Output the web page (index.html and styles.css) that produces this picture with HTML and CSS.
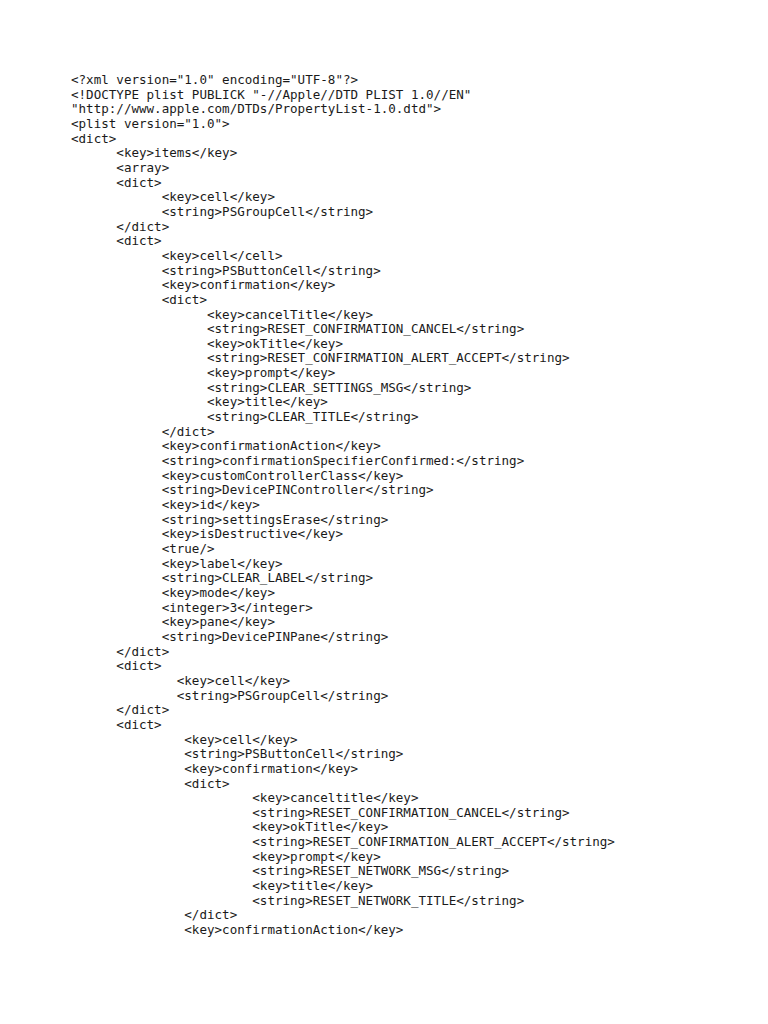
FILE: index.html
```html
<!DOCTYPE html>
<html lang="en">
<head>
<meta charset="UTF-8">
<title>plist</title>
<link rel="stylesheet" href="styles.css">
</head>
<body>
<main class="page">
<pre class="code">&lt;?xml version="1.0" encoding="UTF-8"?&gt;
&lt;!DOCTYPE plist PUBLICK "-//Apple//DTD PLIST 1.0//EN"
"http://www.apple.com/DTDs/PropertyList-1.0.dtd"&gt;
&lt;plist version="1.0"&gt;
&lt;dict&gt;
      &lt;key&gt;items&lt;/key&gt;
      &lt;array&gt;
      &lt;dict&gt;
            &lt;key&gt;cell&lt;/key&gt;
            &lt;string&gt;PSGroupCell&lt;/string&gt;
      &lt;/dict&gt;
      &lt;dict&gt;
            &lt;key&gt;cell&lt;/cell&gt;
            &lt;string&gt;PSButtonCell&lt;/string&gt;
            &lt;key&gt;confirmation&lt;/key&gt;
            &lt;dict&gt;
                  &lt;key&gt;cancelTitle&lt;/key&gt;
                  &lt;string&gt;RESET_CONFIRMATION_CANCEL&lt;/string&gt;
                  &lt;key&gt;okTitle&lt;/key&gt;
                  &lt;string&gt;RESET_CONFIRMATION_ALERT_ACCEPT&lt;/string&gt;
                  &lt;key&gt;prompt&lt;/key&gt;
                  &lt;string&gt;CLEAR_SETTINGS_MSG&lt;/string&gt;
                  &lt;key&gt;title&lt;/key&gt;
                  &lt;string&gt;CLEAR_TITLE&lt;/string&gt;
            &lt;/dict&gt;
            &lt;key&gt;confirmationAction&lt;/key&gt;
            &lt;string&gt;confirmationSpecifierConfirmed:&lt;/string&gt;
            &lt;key&gt;customControllerClass&lt;/key&gt;
            &lt;string&gt;DevicePINController&lt;/string&gt;
            &lt;key&gt;id&lt;/key&gt;
            &lt;string&gt;settingsErase&lt;/string&gt;
            &lt;key&gt;isDestructive&lt;/key&gt;
            &lt;true/&gt;
            &lt;key&gt;label&lt;/key&gt;
            &lt;string&gt;CLEAR_LABEL&lt;/string&gt;
            &lt;key&gt;mode&lt;/key&gt;
            &lt;integer&gt;3&lt;/integer&gt;
            &lt;key&gt;pane&lt;/key&gt;
            &lt;string&gt;DevicePINPane&lt;/string&gt;
      &lt;/dict&gt;
      &lt;dict&gt;
              &lt;key&gt;cell&lt;/key&gt;
              &lt;string&gt;PSGroupCell&lt;/string&gt;
      &lt;/dict&gt;
      &lt;dict&gt;
               &lt;key&gt;cell&lt;/key&gt;
               &lt;string&gt;PSButtonCell&lt;/string&gt;
               &lt;key&gt;confirmation&lt;/key&gt;
               &lt;dict&gt;
                        &lt;key&gt;canceltitle&lt;/key&gt;
                        &lt;string&gt;RESET_CONFIRMATION_CANCEL&lt;/string&gt;
                        &lt;key&gt;okTitle&lt;/key&gt;
                        &lt;string&gt;RESET_CONFIRMATION_ALERT_ACCEPT&lt;/string&gt;
                        &lt;key&gt;prompt&lt;/key&gt;
                        &lt;string&gt;RESET_NETWORK_MSG&lt;/string&gt;
                        &lt;key&gt;title&lt;/key&gt;
                        &lt;string&gt;RESET_NETWORK_TITLE&lt;/string&gt;
               &lt;/dict&gt;
               &lt;key&gt;confirmationAction&lt;/key&gt;</pre>
</main>
</body>
</html>
```

FILE: styles.css
```css
html, body {
  margin: 0;
  padding: 0;
  background: #ffffff;
}

.page {
  width: 768px;
  height: 1024px;
  overflow: hidden;
  box-sizing: border-box;
  padding: 73px 0 0 71px;
}

.code {
  margin: 0;
  font-family: "DejaVu Sans Mono", monospace;
  font-size: 12.56px;
  line-height: 14.66px;
  color: #1a1a1a;
  white-space: pre;
}
```
